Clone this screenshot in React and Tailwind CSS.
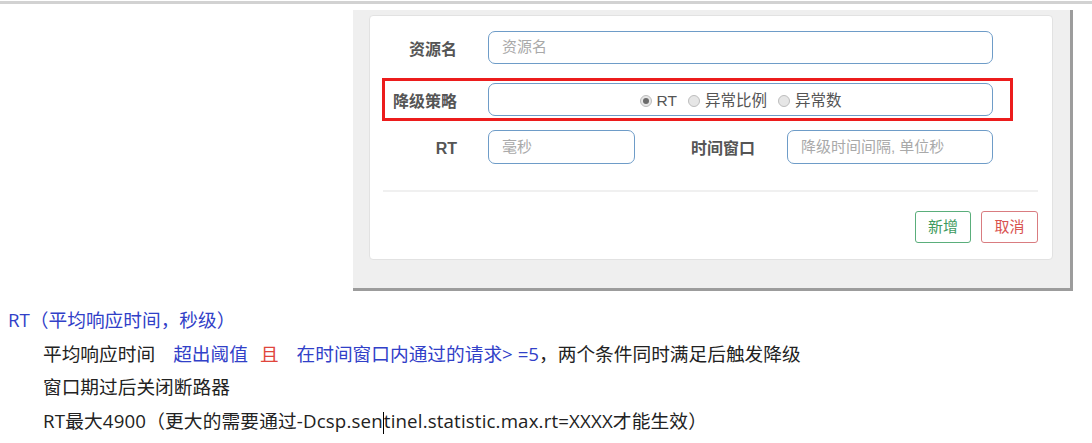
import React from "react";

// small radio dot used inside the strategy field
function Radio({ checked, label }) {
  return (
    <label className="flex items-center gap-[5px]">
      <span className="w-[12px] h-[12px] rounded-full border border-[#bdbdbd] bg-[#e6e6e6] flex items-center justify-center">
        {checked && <span className="w-[6px] h-[6px] rounded-full bg-[#6b6b6b]" />}
      </span>
      <span>{label}</span>
    </label>
  );
}

function Field({ placeholder, className, children }) {
  return (
    <div
      className={
        "h-[33px] border border-[#6e9cc8] rounded-[7px] bg-white flex items-center px-[13px] text-[15px] text-[#a9a9a9] " +
        (className || "")
      }
    >
      {children || placeholder}
    </div>
  );
}

const label = "text-right text-[16px] font-bold text-[#555] pt-[4px]";

export default function App() {
  return (
    <div className="w-[1092px] h-[443px] bg-white overflow-hidden font-['Noto_Sans_CJK_SC',sans-serif]">
      {/* top rule */}
      <div className="h-[3px] mt-[1px] bg-[#d2d2d2]" />

      {/* screenshot panel */}
      <div className="ml-[353px] mt-[6px] w-[720px] h-[281px] bg-[#efefef] border-r-[3px] border-b-[3px] border-[#9c9c9c] pt-[5px] pl-[16px]">
        <div className="w-[684px] h-[245px] bg-white border border-[#e2e2e2] rounded-[4px] pt-[15px] font-['Liberation_Sans','Noto_Sans_CJK_SC',sans-serif]">
          {/* resource name */}
          <div className="flex items-center">
            <div className={"w-[87px] " + label}>资源名</div>
            <Field placeholder="资源名" className="ml-[31px] w-[505px]" />
          </div>

          {/* strategy, highlighted */}
          <div className="mt-[14px] ml-[12px] w-[631px] h-[43px] border-[3px] border-[#ec1c1c] flex items-center">
            <div className={"w-[72px] " + label}>降级策略</div>
            <Field className="ml-[31px] w-[505px] h-[32px] justify-center">
              <div className="flex items-center gap-[11px] text-[15.5px] text-[#555] pt-[2px]">
                <Radio checked label="RT" />
                <Radio label="异常比例" />
                <Radio label="异常数" />
              </div>
            </Field>
          </div>

          {/* RT + window */}
          <div className="mt-[9px] flex items-center">
            <div className={"w-[87px] " + label}>RT</div>
            <Field placeholder="毫秒" className="ml-[31px] w-[147px] h-[34px]" />
            <div className={"w-[120px] " + label}>时间窗口</div>
            <Field placeholder="降级时间间隔, 单位秒" className="ml-[32px] w-[206px] h-[34px]" />
          </div>

          <div className="mt-[26px] ml-[13px] w-[655px] h-[2px] bg-[#f0f0f0]" />

          <div className="mt-[19px] mr-[14px] flex justify-end gap-[10px] text-[15px]">
            <button className="w-[56px] h-[32px] border border-[#5aae7b] rounded-[3px] text-[#3e9a5e]">新增</button>
            <button className="w-[57px] h-[32px] border border-[#d97c80] rounded-[3px] text-[#d9534f]">取消</button>
          </div>
        </div>
      </div>

      {/* notes */}
      <div className="mt-[12px] text-[18.7px] leading-[33.5px] text-[#222] font-['Open_Sans','Noto_Sans_CJK_SC',sans-serif]">
        <div className="pl-[8px] text-[#3140c8]">RT（平均响应时间，秒级）</div>
        <div className="pl-[43px]">
          平均响应时间
          <span className="text-[#3140c8] ml-[18px]">超出阈值</span>
          <span className="text-[#e0463c] ml-[12px]">且</span>
          <span className="text-[#3140c8] ml-[18px]">在时间窗口内通过的请求&gt; =5</span>
          ，两个条件同时满足后触发降级
        </div>
        <div className="pl-[43px]">窗口期过后关闭断路器</div>
        <div className="pl-[43px] tracking-[0.15px]">
          RT最大4900（更大的需要通过-Dcsp.sen
          <span className="inline-block w-px h-[22px] bg-black align-middle" />
          tinel.statistic.max.rt=XXXX才能生效）
        </div>
      </div>
    </div>
  );
}
